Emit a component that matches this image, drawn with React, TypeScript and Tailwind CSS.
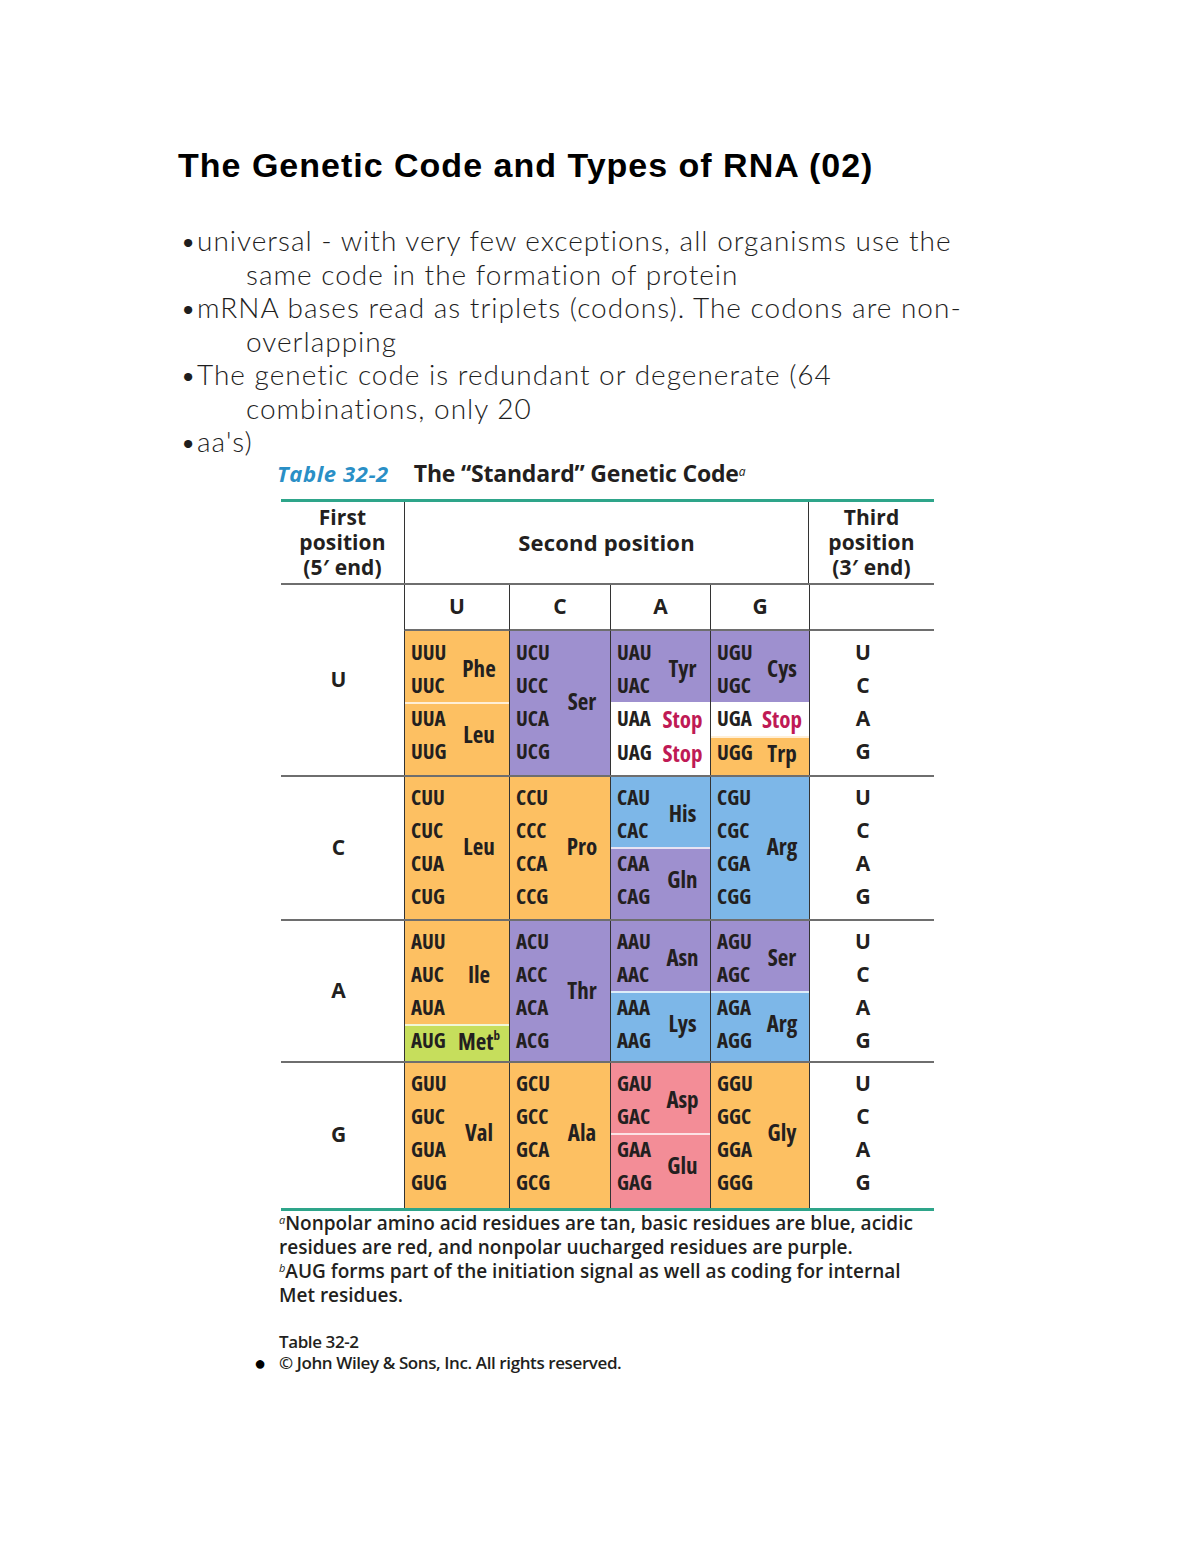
import React from 'react';

interface Block {
  codons: string[];
  aa: string;
  bg: string;
  stop?: boolean;
  sup?: string;
}

interface CodonRow {
  first: string;
  h: string;
  pt: string;
  label: string;
  cols: Block[][];
}

const TAN = 'bg-[#fdc062]';
const PUR = 'bg-[#9e90cf]';
const BLUE = 'bg-[#7db7e8]';
const PINK = 'bg-[#f38d97]';
const GREEN = 'bg-[#c6de5c]';
const WHITE = 'bg-white';

const rows: CodonRow[] = [
  {
    first: 'U',
    h: 'h-[146px]',
    pt: 'pt-[5px]',
    label: 'pb-[46px]',
    cols: [
      [
        { codons: ['UUU', 'UUC'], aa: 'Phe', bg: TAN },
        { codons: ['UUA', 'UUG'], aa: 'Leu', bg: TAN }
      ],
      [{ codons: ['UCU', 'UCC', 'UCA', 'UCG'], aa: 'Ser', bg: PUR }],
      [
        { codons: ['UAU', 'UAC'], aa: 'Tyr', bg: PUR },
        { codons: ['UAA'], aa: 'Stop', bg: WHITE, stop: true },
        { codons: ['UAG'], aa: 'Stop', bg: WHITE, stop: true }
      ],
      [
        { codons: ['UGU', 'UGC'], aa: 'Cys', bg: PUR },
        { codons: ['UGA'], aa: 'Stop', bg: WHITE, stop: true },
        { codons: ['UGG'], aa: 'Trp', bg: TAN }
      ]
    ]
  },
  {
    first: 'C',
    h: 'h-[144px]',
    pt: 'pt-[4px]',
    label: '',
    cols: [
      [{ codons: ['CUU', 'CUC', 'CUA', 'CUG'], aa: 'Leu', bg: TAN }],
      [{ codons: ['CCU', 'CCC', 'CCA', 'CCG'], aa: 'Pro', bg: TAN }],
      [
        { codons: ['CAU', 'CAC'], aa: 'His', bg: BLUE },
        { codons: ['CAA', 'CAG'], aa: 'Gln', bg: PUR }
      ],
      [{ codons: ['CGU', 'CGC', 'CGA', 'CGG'], aa: 'Arg', bg: BLUE }]
    ]
  },
  {
    first: 'A',
    h: 'h-[142px]',
    pt: 'pt-[4px]',
    label: '',
    cols: [
      [
        { codons: ['AUU', 'AUC', 'AUA'], aa: 'Ile', bg: TAN },
        { codons: ['AUG'], aa: 'Met', bg: GREEN, sup: 'b' }
      ],
      [{ codons: ['ACU', 'ACC', 'ACA', 'ACG'], aa: 'Thr', bg: PUR }],
      [
        { codons: ['AAU', 'AAC'], aa: 'Asn', bg: PUR },
        { codons: ['AAA', 'AAG'], aa: 'Lys', bg: BLUE }
      ],
      [
        { codons: ['AGU', 'AGC'], aa: 'Ser', bg: PUR },
        { codons: ['AGA', 'AGG'], aa: 'Arg', bg: BLUE }
      ]
    ]
  },
  {
    first: 'G',
    h: 'h-[145px]',
    pt: 'pt-[4px]',
    label: '',
    cols: [
      [{ codons: ['GUU', 'GUC', 'GUA', 'GUG'], aa: 'Val', bg: TAN }],
      [{ codons: ['GCU', 'GCC', 'GCA', 'GCG'], aa: 'Ala', bg: TAN }],
      [
        { codons: ['GAU', 'GAC'], aa: 'Asp', bg: PINK },
        { codons: ['GAA', 'GAG'], aa: 'Glu', bg: PINK }
      ],
      [{ codons: ['GGU', 'GGC', 'GGA', 'GGG'], aa: 'Gly', bg: TAN }]
    ]
  }
];

const colWidths = ['w-[105px]', 'w-[101px]', 'w-[100px]', 'w-[99px]'];
const bases = ['U', 'C', 'A', 'G'];

function CodonColumn({ blocks, width, pt }: { blocks: Block[]; width: string; pt: string }) {
  return (
    <div className={`${width} flex flex-col border-l border-l-[#333]`}>
      {blocks.map((b, i) => {
        const last = i === blocks.length - 1;
        return (
          <div
            key={i}
            className={`${b.bg} ${i === 0 ? pt : 'shadow-[inset_0_2px_0_rgba(255,255,255,0.75)]'} ${last ? 'flex-1' : ''}`}
          >
            <div className="flex">
              <div className="w-[44px] shrink-0 pl-[6px]">
                {b.codons.map((c) => (
                  <div key={c} className="h-[33px] leading-[33px]">
                    {c}
                  </div>
                ))}
              </div>
              <div className={`flex-1 flex items-center justify-center text-[23px] ${b.stop ? 'text-[#bf1a55]' : ''}`}>
                {b.aa}
                {b.sup && <sup className="text-[13px] -top-[6px] relative">{b.sup}</sup>}
              </div>
            </div>
          </div>
        );
      })}
    </div>
  );
}

function GeneticCodeTable() {
  return (
    <div className="ml-[103px] w-[653px] border-t-[3px] border-b-[3px] border-[#2ea58a] font-['Open_Sans',sans-serif] text-[#231f20]">
      {/* header */}
      <div className="flex h-[83px] border-b-2 border-b-[#6e6e6e] text-[21px] font-bold leading-[25px] tracking-[0.1px]">
        <div className="w-[123px] flex flex-col items-center justify-center">
          <span>First</span>
          <span>position</span>
          <span>(5′ end)</span>
        </div>
        <div className="w-[405px] flex items-center justify-center border-l border-r border-[#333] text-[22px] tracking-[0.2px]">
          Second position
        </div>
        <div className="w-[125px] flex flex-col items-center justify-center">
          <span>Third</span>
          <span>position</span>
          <span>(3′ end)</span>
        </div>
      </div>

      {/* second position letters */}
      <div className="flex h-[46px] text-[21px] font-bold">
        <div className="w-[123px]" />
        {bases.map((b, i) => (
          <div
            key={b}
            className={`${colWidths[i]} flex items-center justify-center border-l border-l-[#333] border-b-2 border-b-[#6e6e6e]`}
          >
            {b}
          </div>
        ))}
        <div className="w-[125px] border-l border-l-[#333] border-b-2 border-b-[#6e6e6e]" />
      </div>

      {rows.map((r, ri) => (
        <div key={r.first} className={`flex ${r.h} ${ri < rows.length - 1 ? 'border-b-2 border-b-[#6e6e6e]' : ''}`}>
          <div className={`w-[123px] flex items-center justify-center pr-[8px] text-[21px] font-bold ${r.label}`}>{r.first}</div>
          <div className="flex font-['Liberation_Sans_Narrow','Open_Sans',sans-serif] font-bold font-stretch-condensed text-[21px]">
            {r.cols.map((c, ci) => (
              <CodonColumn key={ci} blocks={c} width={colWidths[ci]} pt={r.pt} />
            ))}
          </div>
          <div className={`w-[125px] border-l border-l-[#333] ${r.pt} text-[21px] font-bold`}>
            {bases.map((b) => (
              <div key={b} className="h-[33px] leading-[33px] text-center pr-[18px]">
                {b}
              </div>
            ))}
          </div>
        </div>
      ))}
    </div>
  );
}

export default function App() {
  return (
    <div className="w-[1200px] min-h-[1553px] bg-white pl-[178px] pt-[145px]">
      <h1 className="font-['Liberation_Sans',sans-serif] font-bold text-[34px] leading-[40px] tracking-[1px] text-black">
        The Genetic Code and Types of RNA (02)
      </h1>

      <div className="mt-[39px] font-['Lato',sans-serif] font-light text-[28px] leading-[33.5px] tracking-[1px] text-[#1e1e1e]">
        <div className="flex">
          <span className="w-[19px] pl-[2px]">•</span>
          <span>universal - with very few exceptions, all organisms use the</span>
        </div>
        <div className="pl-[68px]">same code in the formation of protein</div>
        <div className="flex">
          <span className="w-[19px] pl-[2px]">•</span>
          <span>mRNA bases read as triplets (codons). The codons are non-</span>
        </div>
        <div className="pl-[68px]">overlapping</div>
        <div className="flex">
          <span className="w-[19px] pl-[2px]">•</span>
          <span>The genetic code is redundant or degenerate (64</span>
        </div>
        <div className="pl-[68px]">combinations, only 20</div>
        <div className="flex">
          <span className="w-[19px] pl-[2px]">•</span>
          <span>aa's)</span>
        </div>
      </div>

      <div className="ml-[99px] flex items-baseline h-[28px] leading-[28px] font-['Open_Sans',sans-serif] font-bold">
        <span className="italic text-[22px] text-[#2a8fc6] tracking-[0.6px]">Table 32-2</span>
        <span className="ml-[25px] text-[23px] text-[#231f20] tracking-[-0.2px]">
          The “Standard” Genetic Code<sup className="italic font-normal text-[12px]">a</sup>
        </span>
      </div>

      <div className="mt-[12px]">
        <GeneticCodeTable />
      </div>

      <div className="ml-[101px] font-['Open_Sans',sans-serif] font-semibold text-[19px] leading-[24px] text-[#231f20] tracking-[0px]">
        <div>
          <sup className="italic font-normal text-[11px]">a</sup>Nonpolar amino acid residues are tan, basic residues are blue, acidic
        </div>
        <div>residues are red, and nonpolar uucharged residues are purple.</div>
        <div>
          <sup className="italic font-normal text-[11px]">b</sup>AUG forms part of the initiation signal as well as coding for internal
        </div>
        <div>Met residues.</div>
      </div>

      <div className="mt-[24px] font-['Open_Sans',sans-serif] font-semibold text-[17px] leading-[21px] text-[#231f20] tracking-[-0.4px]">
        <div className="ml-[101px]">Table 32-2</div>
        <div className="ml-[76px] flex items-center">
          <span className="w-[25px] text-[20px] leading-[21px] text-black">●</span>
          <span>© John Wiley &amp; Sons, Inc. All rights reserved.</span>
        </div>
      </div>
    </div>
  );
}
